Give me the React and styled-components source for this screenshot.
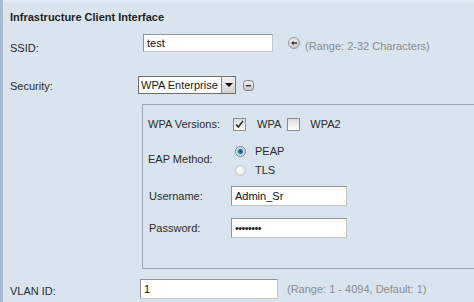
import React from 'react';
import styled, { createGlobalStyle } from 'styled-components';

const GlobalStyle = createGlobalStyle`
  html, body {
    margin: 0;
    padding: 0;
    background: #d9e4ef;
  }
  body {
    font-family: "Liberation Sans", Arial, sans-serif;
    font-size: 11px;
    color: #2b2b2b;
  }
`;

const Panel = styled.div`
  width: 474px;
  height: 302px;
  box-sizing: border-box;
  overflow: hidden;
  background: linear-gradient(#e6eef6 0, #d9e4ef 4px);
  border-left: 3px solid #a9bcd2;
  padding: 9px 0 0 7px;
  white-space: nowrap;
`;

const Title = styled.div`
  font-weight: bold;
  font-size: 11px;
  color: #1e1e1e;
  height: 16px;
  line-height: 16px;
`;

const Row = styled.div`
  display: flex;
  align-items: center;
  margin-top: ${(p) => p.$top}px;
  height: ${(p) => p.$height || 20}px;
`;

const Label = styled.div`
  width: ${(p) => p.$width || 130}px;
  flex: none;
  padding-top: ${(p) => p.$drop || 0}px;
  padding-bottom: ${(p) => p.$lift || 0}px;
  padding-left: ${(p) => p.$indent || 0}px;
  box-sizing: border-box;
  color: #2b2b2b;
`;

const TextInput = styled.div`
  box-sizing: border-box;
  width: ${(p) => p.$width}px;
  height: ${(p) => p.$height || 20}px;
  margin-left: ${(p) => p.$shift || 0}px;
  background: #fff;
  border: 1px solid #c4c8cc;
  border-top-color: #8f9499;
  border-left-color: #8f9499;
  padding: 0 3px;
  display: flex;
  align-items: center;
  color: #111;
  font-size: 11px;
`;

const Dots = styled.span`
  font-size: 11px;
  letter-spacing: -0.6px;
  color: #222;
`;

const Hint = styled.span`
  color: #8c8c8c;
  margin-left: ${(p) => p.$gap}px;
  padding-top: ${(p) => p.$drop || 0}px;
`;

const Select = styled.div`
  box-sizing: border-box;
  width: 98px;
  height: 18px;
  background: #fff;
  border: 1px solid #6f6f6f;
  display: flex;
  align-items: stretch;
  color: #1a1a1a;
`;

const SelectText = styled.span`
  flex: 1;
  padding-left: 2px;
  line-height: 16px;
  overflow: hidden;
`;

const SelectButton = styled.span`
  width: 13px;
  border-left: 1px solid #8a8a8a;
  background: linear-gradient(#f4f4f4, #cfcfcf);
  display: flex;
  align-items: center;
  justify-content: center;
  &::after {
    content: '';
    border-left: 4px solid transparent;
    border-right: 4px solid transparent;
    border-top: 4px solid #111;
  }
`;

const Fieldset = styled.div`
  margin-top: 10px;
  margin-left: 132px;
  width: 360px;
  height: 165px;
  box-sizing: border-box;
  border: 1px solid #9aa7b4;
  padding: 12px 0 0 5px;
`;

const Check = styled.span`
  box-sizing: border-box;
  width: 13px;
  height: 13px;
  flex: none;
  border: 1px solid #8a8f94;
  background: linear-gradient(#dcdcdc, #ffffff);
  display: inline-flex;
  align-items: center;
  justify-content: center;
`;

const Radio = styled.span`
  box-sizing: border-box;
  width: 11px;
  height: 11px;
  flex: none;
  border-radius: 50%;
  border: 1px solid ${(p) => (p.$on ? '#6b8799' : '#c3c7cb')};
  background: ${(p) =>
    p.$on
      ? 'radial-gradient(circle at 50% 50%, #1f4f6e 0, #2d6686 28%, #a9c3d3 45%, #e9eef2 70%)'
      : 'radial-gradient(circle at 40% 40%, #ffffff 0, #dfe3e7 80%)'};
`;

const OptionText = styled.span`
  margin-left: ${(p) => p.$gap}px;
  margin-right: ${(p) => p.$after || 0}px;
`;

const RadioStack = styled.div`
  display: flex;
  flex-direction: column;
  gap: 7px;
`;

const RadioLine = styled.div`
  display: flex;
  align-items: center;
  height: 12px;
`;

const CheckMark = () => (
  <svg width="11" height="11" viewBox="0 0 11 11">
    <path d="M2 5.5 L4.3 8 L9 2" fill="none" stroke="#2a2a2a" strokeWidth="1.5" />
  </svg>
);

const BackIcon = () => (
  <svg width="12" height="12" viewBox="0 0 12 12" style={{ flex: 'none' }}>
    <defs>
      <radialGradient id="bk" cx="40%" cy="35%" r="70%">
        <stop offset="0" stopColor="#fafafa" />
        <stop offset="1" stopColor="#b9bcbf" />
      </radialGradient>
    </defs>
    <circle cx="6" cy="6" r="5.5" fill="url(#bk)" stroke="#8e9296" strokeWidth="0.8" />
    <path d="M3 6 L5.6 3.6 L5.6 5.2 L9 5.2 L9 6.8 L5.6 6.8 L5.6 8.4 Z" fill="#333" />
  </svg>
);

const MinusIcon = () => (
  <svg width="11" height="11" viewBox="0 0 11 11" style={{ flex: 'none', marginLeft: 7 }}>
    <defs>
      <linearGradient id="mn" x1="0" y1="0" x2="0" y2="1">
        <stop offset="0" stopColor="#f4f4f4" />
        <stop offset="1" stopColor="#c2c5c8" />
      </linearGradient>
    </defs>
    <rect x="0.5" y="0.5" width="10" height="10" rx="3" fill="url(#mn)" stroke="#7d8186" />
    <rect x="3" y="5" width="5" height="1.4" fill="#333" />
  </svg>
);

export default function App() {
  return (
    <>
      <GlobalStyle />
      <Panel>
        <Title>Infrastructure Client Interface</Title>

        <Row $top={9} $height={18}>
          <Label $drop={9}>SSID:</Label>
          <TextInput $width={130} $height={18} $shift={3}>test</TextInput>
          <span style={{ width: 15 }} />
          <BackIcon />
          <Hint $gap={5} $drop={6}>(Range: 2-32 Characters)</Hint>
        </Row>

        <Row $top={24} $height={18}>
          <Label $width={128} $drop={1}>Security:</Label>
          <Select>
            <SelectText>WPA Enterprise</SelectText>
            <SelectButton />
          </Select>
          <MinusIcon />
        </Row>

        <Fieldset>
          <Row $top={0} $height={14}>
            <Label $width={85}>WPA Versions:</Label>
            <Check><CheckMark /></Check>
            <OptionText $gap={11} $after={6}>WPA</OptionText>
            <Check />
            <OptionText $gap={10}>WPA2</OptionText>
          </Row>

          <Row $top={14} $height={31}>
            <Label $width={87} $lift={4}>EAP Method:</Label>
            <RadioStack>
              <RadioLine>
                <Radio $on />
                <OptionText $gap={9}>PEAP</OptionText>
              </RadioLine>
              <RadioLine>
                <Radio />
                <OptionText $gap={9}>TLS</OptionText>
              </RadioLine>
            </RadioStack>
          </Row>

          <Row $top={10} $height={20}>
            <Label $width={83} $indent={1}>Username:</Label>
            <TextInput $width={116}>Admin_Sr</TextInput>
          </Row>

          <Row $top={12} $height={20}>
            <Label $width={83} $indent={1}>Password:</Label>
            <TextInput $width={116}>
              <Dots>••••••••</Dots>
            </TextInput>
          </Row>
        </Fieldset>

        <Row $top={10} $height={20}>
          <Label $drop={4}>VLAN ID:</Label>
          <TextInput $width={138}>1</TextInput>
          <Hint $gap={9}>(Range: 1 - 4094, Default: 1)</Hint>
        </Row>
      </Panel>
    </>
  );
}
